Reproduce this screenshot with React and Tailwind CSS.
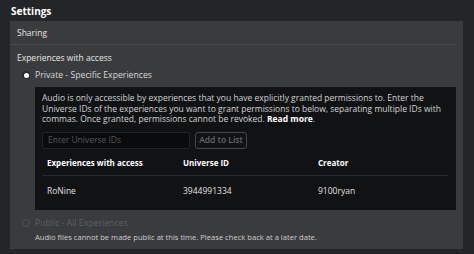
import React from "react"

const rows = [{ name: "RoNine", id: "3944991334", creator: "9100ryan" }]

export default function App() {
    return (
        <div className="w-[474px] h-[254px] bg-[#232527] overflow-hidden text-[#e8e8e8]" style={{ fontFamily: '"Open Sans", "Liberation Sans", sans-serif' }}>
            <div className="h-[21px] pl-[11px] pt-[3px] text-[10px] font-bold text-white leading-[16px]">Settings</div>
            <div className="ml-[10px] w-[453px] h-[228px] bg-[#393b3d] flex flex-col">
                <div className="mr-[7px] h-[24px] border-b border-[#4a4c4e] pl-[7px] pt-[1px] flex items-center text-[8.5px] font-medium">Sharing</div>
                <div className="pl-[7px] pt-[6px] text-[8.5px] font-medium leading-[14px]">Experiences with access</div>
                <div className="flex items-center pl-[12px] mt-[4px] gap-[5px] text-[8.7px] leading-[12px]">
                    <span className="w-[8px] h-[8px] rounded-full bg-[#2a2b2d] flex items-center justify-center">
                        <span className="w-[5px] h-[5px] rounded-full bg-white"></span>
                    </span>
                    <span className="text-[#d8d8d8]">Private - Specific Experiences</span>
                </div>
                <div className="ml-[25px] mr-[7px] mt-[6px] h-[123px] bg-[#111214] px-[7px] pt-[6px]">
                    <p className="text-[8.5px] leading-[10.5px] text-[#d4d4d4]">
                        Audio is only accessible by experiences that you have explicitly granted permissions to. Enter the<br />
                        Universe IDs of the experiences you want to grant permissions to below, separating multiple IDs with<br />
                        commas. Once granted, permissions cannot be revoked. <span className="font-bold text-white">Read more</span>.
                    </p>
                    <div className="flex gap-[5px] mt-[7px]">
                        <div className="w-[148px] h-[17px] bg-[#0a0b0c] border border-[#232426] rounded-[3px] flex items-center pl-[5px] text-[8.5px] text-[#55575a]">Enter Universe IDs</div>
                        <div className="w-[52px] h-[17px] border border-[#45474a] rounded-[3px] flex items-center justify-center text-[8.5px] font-semibold text-[#66686b]">Add to List</div>
                    </div>
                    <div className="flex mt-[8px] h-[12px] items-center text-[8px] font-bold text-white">
                        <div className="w-[141px] pl-[5px]">Experiences with access</div>
                        <div className="w-[135px]">Universe ID</div>
                        <div>Creator</div>
                    </div>
                    <div className="h-px bg-[#2a2b2d] mt-[6px] mr-[1px]"></div>
                    {rows.map(r => (
                        <div key={r.id} className="flex h-[31px] items-center text-[8.5px] text-[#e0e0e0]">
                            <div className="w-[141px] pl-[5px]">{r.name}</div>
                            <div className="w-[135px]">{r.id}</div>
                            <div>{r.creator}</div>
                        </div>
                    ))}
                </div>
                <div className="flex items-center pl-[12px] mt-[7px] gap-[5px] text-[8.7px] leading-[12px]">
                    <span className="w-[8px] h-[8px] rounded-full border border-[#4e5052]"></span>
                    <span className="text-[#5e6062]">Public - All Experiences</span>
                </div>
                <div className="pl-[25px] mt-[3px] text-[7.6px] leading-[11px] text-[#cfcfcf]">Audio files cannot be made public at this time. Please check back at a later date.</div>
            </div>
        </div>
    )
}
